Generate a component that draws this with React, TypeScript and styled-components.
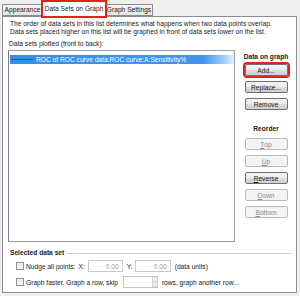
import { FC } from "react";
import styled, { createGlobalStyle } from "styled-components";

const GlobalStyle = createGlobalStyle`
  html, body {
    margin: 0;
    padding: 0;
    background: #f0f0f0;
  }
  * {
    box-sizing: border-box;
  }
`;

const Wrapper = styled.div`
  width: 300px;
  height: 296px;
  padding: 1px 3px 3px 2px;
  display: flex;
  flex-direction: column;
  background: #f0f0f0;
  font-family: "Liberation Sans", Arial, sans-serif;
  font-size: 6.65px;
  color: #1a1a1a;
`;

const TabBar = styled.div`
  height: 15px;
  display: flex;
  align-items: flex-end;
  position: relative;
  z-index: 1;
`;

const Tab = styled.div<{ $active?: boolean; $w: number }>`
  width: ${(p) => p.$w}px;
  height: ${(p) => (p.$active ? 16 : 12)}px;
  margin-bottom: ${(p) => (p.$active ? -1 : 0)}px;
  margin-right: -1px;
  border: 1px solid #898c95;
  border-bottom: ${(p) => (p.$active ? "none" : "1px solid #898c95")};
  background: ${(p) => (p.$active ? "#ffffff" : "linear-gradient(#f6f6f6, #e4e4e4)")};
  display: flex;
  align-items: ${(p) => (p.$active ? "flex-start" : "center")};
  justify-content: center;
  padding-top: ${(p) => (p.$active ? 3 : 0)}px;
  line-height: 8px;
  white-space: nowrap;
  outline: ${(p) => (p.$active ? "2px solid #e2231a" : "none")};
  outline-offset: -1px;
  position: relative;
  z-index: ${(p) => (p.$active ? 2 : 0)};
`;

const Panel = styled.div`
  flex: 1;
  border: 1px solid #898c95;
  background: #ffffff;
  padding: 3px 4px 0 5px;
  display: flex;
  flex-direction: column;
`;

const Description = styled.div`
  padding-left: 2px;
  line-height: 8px;
  white-space: nowrap;
`;

const Label = styled.div`
  margin-top: 4px;
  padding-left: 1px;
  line-height: 8px;
`;

const MainRow = styled.div`
  margin-top: 2px;
  display: flex;
`;

const ListBox = styled.div`
  width: 227px;
  height: 192px;
  border: 1px solid #9a9ea6;
  border-left-color: #7a7e86;
  background: #ffffff;
  padding: 4px 0 0 1px;
`;

const ListItem = styled.div`
  height: 9px;
  display: flex;
  align-items: center;
  background: linear-gradient(90deg, #3b8ee8 0%, #3f95ee 86%, #9cc8f4 95%, #e6f1fc 100%);
  color: #ffffff;
  white-space: nowrap;
`;

const LineSwatch = styled.span`
  width: 22px;
  height: 1px;
  margin: 0 3px 0 1px;
  background: #4d5866;
`;

const SideColumn = styled.div`
  flex: 1;
  padding-left: 5px;
  display: flex;
  flex-direction: column;
  align-items: center;
`;

const SideHeading = styled.div<{ $top: number }>`
  margin-top: ${(p) => p.$top}px;
  font-weight: bold;
  line-height: 8px;
  white-space: nowrap;
`;

const Button = styled.div<{ $disabled?: boolean; $highlight?: boolean; $top: number }>`
  width: 43px;
  height: 12px;
  margin-top: ${(p) => p.$top}px;
  border: 1px solid ${(p) => (p.$disabled ? "#b8bcc0" : "#707070")};
  border-radius: 2px;
  background: ${(p) => (p.$disabled ? "#f4f4f4" : "linear-gradient(#f4f4f4 0%, #ebebeb 50%, #dddddd 51%, #cfcfcf 100%)")};
  color: ${(p) => (p.$disabled ? "#8a8a8a" : "#1a1a1a")};
  display: flex;
  align-items: center;
  justify-content: center;
  outline: ${(p) => (p.$highlight ? "2px solid #e2231a" : "none")};
  outline-offset: 0;
`;

const Mnemonic = styled.span`
  text-decoration: underline;
`;

const Group = styled.div`
  margin-top: 7px;
  display: flex;
  flex-direction: column;
`;

const GroupHeading = styled.div`
  display: flex;
  align-items: center;
  gap: 3px;
  padding-left: 2px;
  line-height: 8px;
  font-weight: bold;
  white-space: nowrap;
`;

const Rule = styled.div`
  flex: 1;
  height: 1px;
  background: #d0d0d0;
`;

const OptionRow = styled.div<{ $top: number }>`
  margin-top: ${(p) => p.$top}px;
  height: 12px;
  padding-left: 8px;
  display: flex;
  align-items: center;
  white-space: nowrap;
`;

const CheckBox = styled.span`
  width: 8px;
  height: 8px;
  margin-right: 2px;
  border: 1px solid #8e8f8f;
  background: linear-gradient(135deg, #dcdcdc, #fbfbfb);
  box-shadow: inset 0 0 0 1px #f4f4f4;
`;

const FieldLabel = styled.span<{ $left: number }>`
  margin-left: ${(p) => p.$left}px;
`;

const NumberField = styled.span<{ $left: number; $w: number }>`
  width: ${(p) => p.$w}px;
  height: 12px;
  margin-left: ${(p) => p.$left}px;
  border: 1px solid #c9c9c9;
  background: #ffffff;
  color: #9a9a9a;
  display: flex;
  align-items: center;
  justify-content: flex-end;
  padding-right: 3px;
`;

const SpinField = styled.span`
  width: 35px;
  height: 12px;
  margin-left: 5px;
  border: 1px solid #c9c9c9;
  background: #ffffff;
  display: flex;
  justify-content: flex-end;
`;

const SpinButtons = styled.span`
  width: 5px;
  display: flex;
  flex-direction: column;
  border-left: 1px solid #d4d4d4;
`;

const SpinHalf = styled.span`
  flex: 1;
  background: #ececec;
  border-bottom: 1px solid #d8d8d8;
`;

const App: FC = () => {
  return (
    <Wrapper>
      <GlobalStyle />
      <TabBar>
        <Tab $w={41}>Appearance</Tab>
        <Tab $w={64} $active>Data Sets on Graph</Tab>
        <Tab $w={48}>Graph Settings</Tab>
      </TabBar>
      <Panel>
        <Description>
          The order of data sets in this list determines what happens when two data points overlap.
          <br />
          Data sets placed higher on this list will be graphed in front of data sets lower on the list.
        </Description>
        <Label>Data sets plotted (front to back):</Label>
        <MainRow>
          <ListBox>
            <ListItem>
              <LineSwatch />
              ROC of ROC curve data:ROC curve:A:Sensitivity%
            </ListItem>
          </ListBox>
          <SideColumn>
            <SideHeading $top={3}>Data on graph</SideHeading>
            <Button $top={3} $highlight>Add...</Button>
            <Button $top={5}>Replace...</Button>
            <Button $top={5}>Remove</Button>
            <SideHeading $top={15}>Reorder</SideHeading>
            <Button $top={5} $disabled><Mnemonic>T</Mnemonic>op</Button>
            <Button $top={5} $disabled><Mnemonic>U</Mnemonic>p</Button>
            <Button $top={5}><Mnemonic>R</Mnemonic>everse</Button>
            <Button $top={5} $disabled><Mnemonic>D</Mnemonic>own</Button>
            <Button $top={5} $disabled><Mnemonic>B</Mnemonic>ottom</Button>
          </SideColumn>
        </MainRow>
        <Group>
          <GroupHeading>
            Selected data set
            <Rule />
          </GroupHeading>
          <OptionRow $top={3}>
            <CheckBox />
            Nudge all points:
            <FieldLabel $left={3}>X:</FieldLabel>
            <NumberField $left={3} $w={35}>0.00</NumberField>
            <FieldLabel $left={4}>Y:</FieldLabel>
            <NumberField $left={2} $w={36}>0.00</NumberField>
            <FieldLabel $left={4}>(data units)</FieldLabel>
          </OptionRow>
          <OptionRow $top={4}>
            <CheckBox />
            Graph faster. Graph a row, skip
            <SpinField>
              <SpinButtons>
                <SpinHalf />
                <SpinHalf />
              </SpinButtons>
            </SpinField>
            <FieldLabel $left={4}>rows, graph another row...</FieldLabel>
          </OptionRow>
        </Group>
      </Panel>
    </Wrapper>
  );
};

export default App;
